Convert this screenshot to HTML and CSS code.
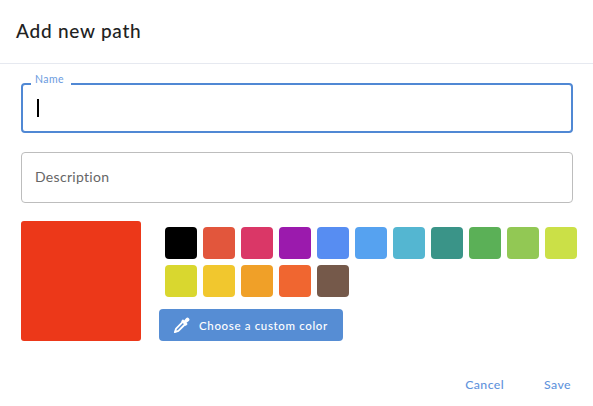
FILE: index.html
```html
<!DOCTYPE html>
<html lang="en">
<head>
    <meta charset="UTF-8">
    <title>Add new path</title>
    <link rel="stylesheet" href="styles.css">
</head>
<body>
    <div class="title-bar">Add new path</div>
    <div class="content">
        <div class="field field-active">
            <span class="field-label">Name</span>
            <span class="caret"></span>
        </div>
        <div class="field">
            <span class="placeholder">Description</span>
        </div>
        <div class="color-row">
            <div class="color-preview"></div>
            <div class="color-side">
                <div class="swatches">
                    <div class="swatch c-black"></div>
                    <div class="swatch c-red"></div>
                    <div class="swatch c-pink"></div>
                    <div class="swatch c-purple"></div>
                    <div class="swatch c-blue"></div>
                    <div class="swatch c-sky"></div>
                    <div class="swatch c-cyan"></div>
                    <div class="swatch c-teal"></div>
                    <div class="swatch c-green"></div>
                    <div class="swatch c-lime"></div>
                    <div class="swatch c-yellowgreen"></div>
                    <div class="swatch c-mustard"></div>
                    <div class="swatch c-yellow"></div>
                    <div class="swatch c-amber"></div>
                    <div class="swatch c-orange"></div>
                    <div class="swatch c-brown"></div>
                </div>
                <div class="custom-btn">
                    <svg class="dropper" width="17" height="17" viewBox="0 0 16 16">
                        <path d="M9.4 4.4 2.9 10.9 1.7 14.3 5.1 13.1 11.6 6.6" fill="none" stroke="#fff" stroke-width="1.7" stroke-linejoin="round"/>
                        <path d="M7.6 4 9.4 2.2 10.5 3.3 12.3 1.1a1.8 1.8 0 0 1 2.6 2.6L12.7 5.5 13.8 6.6 12 8.4Z" fill="#fff"/>
                    </svg>
                    <span>Choose a custom color</span>
                </div>
            </div>
        </div>
    </div>
    <div class="actions">
        <span class="action">Cancel</span>
        <span class="action">Save</span>
    </div>
</body>
</html>
```

FILE: styles.css
```css
body {
    margin: 0;
    background-color: white;
    font-family: "Lato", "Noto Sans", sans-serif;
    width: 593px;
    height: 406px;
    overflow: hidden;
}
.title-bar {
    height: 63px;
    line-height: 61px;
    padding-left: 16px;
    font-size: 19px;
    font-weight: 500;
    letter-spacing: 0.75px;
    color: #222;
    border-bottom: 1px solid #e6e9f0;
}
.content {
    padding: 19px 20px 0 21px;
}
.field {
    position: relative;
    box-sizing: border-box;
    height: 51px;
    margin-bottom: 18px;
    padding-left: 13px;
    display: flex;
    align-items: center;
    border: 1px solid #bdbdbd;
    border-radius: 4px;
}
.field-active {
    height: 50px;
    margin-bottom: 19px;
    border: 2px solid #5088d4;
    padding-left: 14px;
}
.field-label {
    position: absolute;
    top: -10px;
    left: 8px;
    height: 12px;
    padding: 0 7px 0 4px;
    background-color: white;
    font-size: 10.5px;
    line-height: 9px;
    letter-spacing: 0.4px;
    color: #6b9be0;
}
.caret {
    width: 2px;
    height: 18px;
    background-color: black;
}
.placeholder {
    font-size: 14px;
    letter-spacing: 0.3px;
    color: #666;
    position: relative;
    top: -1px;
}
.color-row {
    display: flex;
}
.color-preview {
    width: 120px;
    height: 120px;
    flex-shrink: 0;
    background-color: #ec3819;
    border-radius: 3px;
}
.color-side {
    margin-left: 18px;
}
.swatches {
    display: flex;
    flex-wrap: wrap;
    gap: 6px;
    width: 412px;
    padding: 6px 0 0 6px;
}
.swatch {
    width: 32px;
    height: 32px;
    border-radius: 4px;
}
.c-black { background-color: #000000; }
.c-red { background-color: #e2563c; }
.c-pink { background-color: #da3767; }
.c-purple { background-color: #9b1aad; }
.c-blue { background-color: #578df2; }
.c-sky { background-color: #56a2f0; }
.c-cyan { background-color: #54b6d1; }
.c-teal { background-color: #3a9488; }
.c-green { background-color: #5bb057; }
.c-lime { background-color: #92c854; }
.c-yellowgreen { background-color: #cbe047; }
.c-mustard { background-color: #d9d72f; }
.c-yellow { background-color: #f1c72e; }
.c-amber { background-color: #f0a028; }
.c-orange { background-color: #f06630; }
.c-brown { background-color: #75594a; }
.custom-btn {
    width: 184px;
    height: 32px;
    margin-top: 12px;
    display: flex;
    align-items: center;
    gap: 9px;
    box-sizing: border-box;
    padding-left: 14px;
    background-color: #568dd4;
    border-radius: 4px;
    color: white;
    font-size: 11.5px;
    font-weight: 500;
    letter-spacing: 0.65px;
}
.actions {
    display: flex;
    justify-content: flex-end;
    gap: 40px;
    padding: 36px 22px 0 0;
}
.action {
    font-size: 12.3px;
    line-height: 16px;
    font-weight: 500;
    letter-spacing: 0.4px;
    color: #5f93dc;
}
```
